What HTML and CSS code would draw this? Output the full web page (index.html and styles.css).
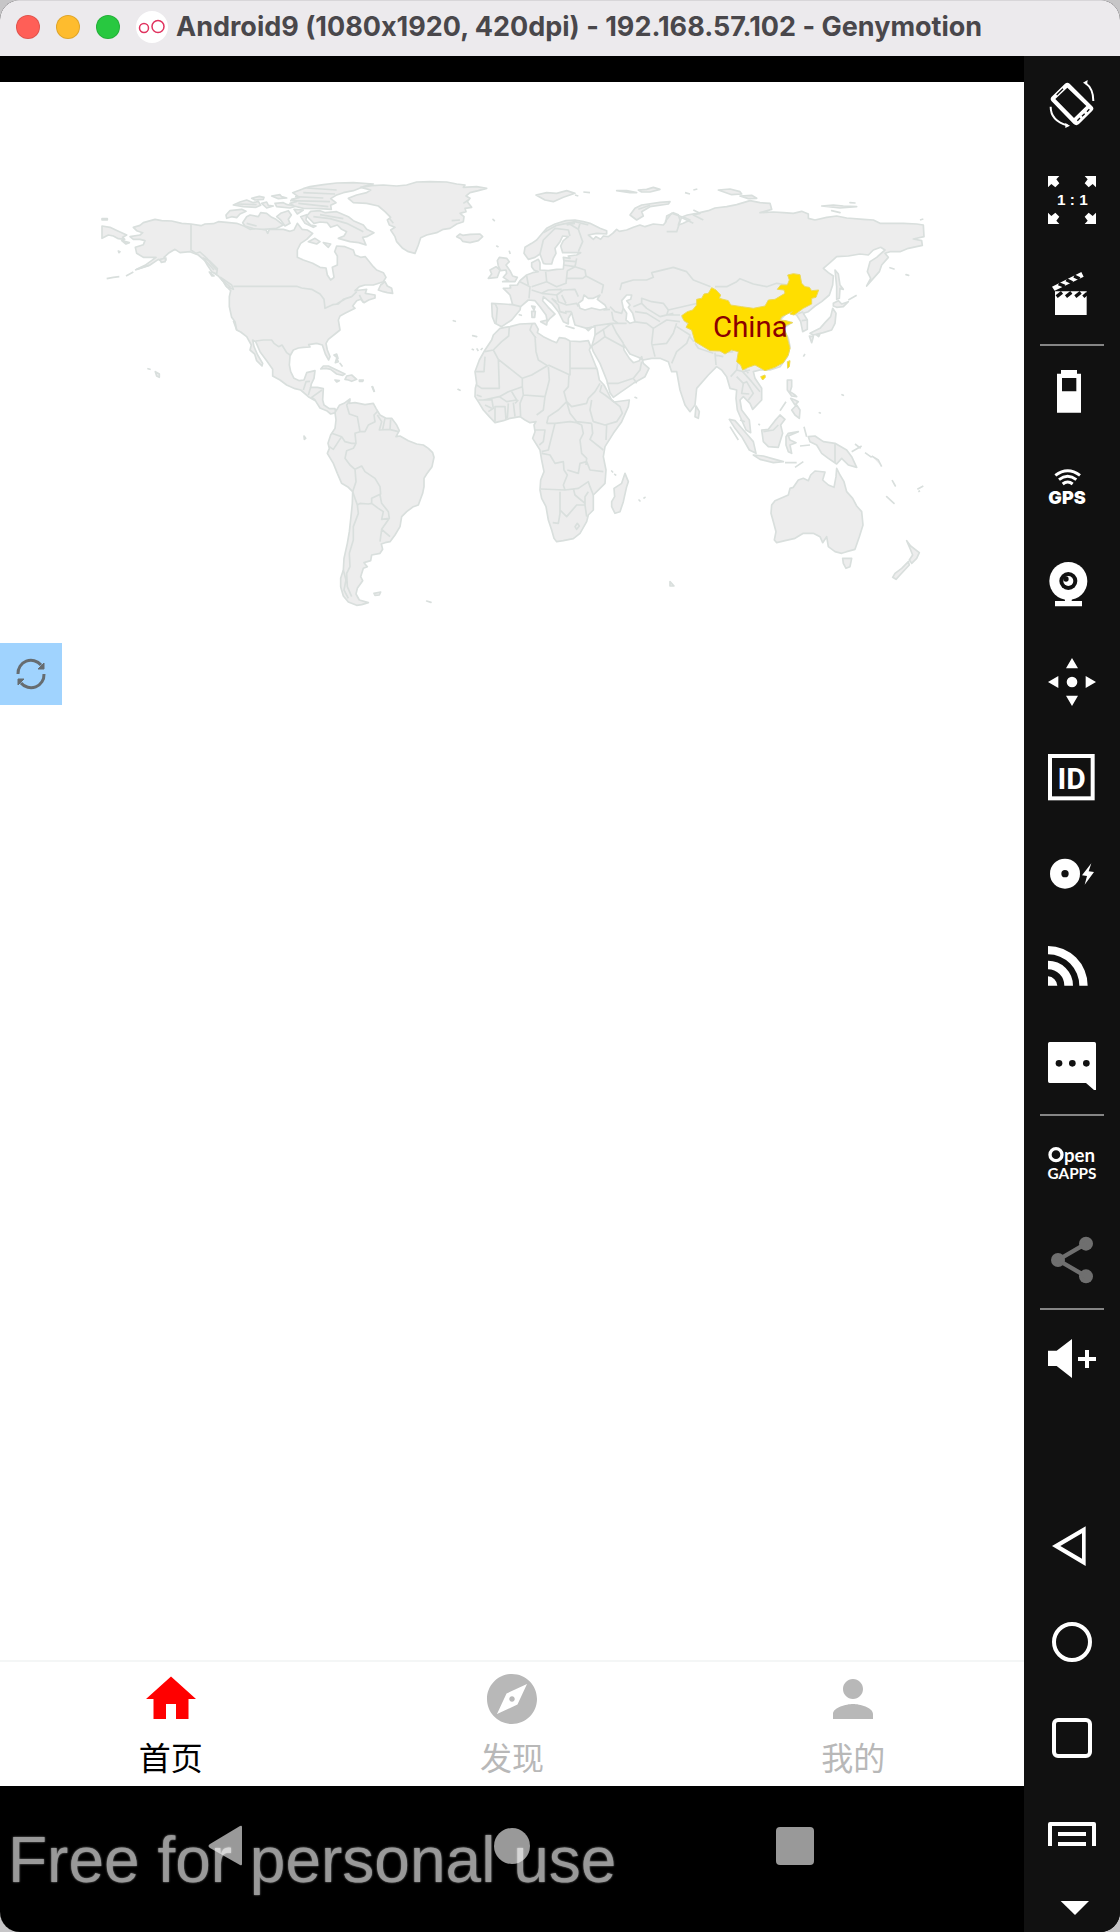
FILE: index.html
```html
<!DOCTYPE html>
<html lang="zh-CN">
<head>
<meta charset="utf-8">
<meta name="viewport" content="width=device-width, initial-scale=1">
<title>Android9 - Genymotion</title>
<link rel="stylesheet" href="styles.css">
</head>
<body>
<div class="window">
  <header class="titlebar">
    <div class="lights">
      <button class="light light-close" aria-label="Close"></button>
      <button class="light light-min" aria-label="Minimize"></button>
      <button class="light light-zoom" aria-label="Zoom"></button>
    </div>
    <svg class="logo" viewBox="0 0 32 32" aria-hidden="true">
      <circle cx="16" cy="16" r="16" fill="#fff"/>
      <g fill="none" stroke="#e0335f" stroke-width="1.5"><circle cx="8" cy="17" r="4.5"/><circle cx="22" cy="15.500" r="6"/></g>
    </svg>
    <h1 class="title">Android9 (1080x1920, 420dpi) - 192.168.57.102 - Genymotion</h1>
  </header>

  <div class="body">
    <div class="device">
      <div class="statusbar"></div>
      <main class="content">
        <svg class="map" viewBox="-270 -264 3072 1683" role="img" aria-label="World map">
          <!-- North America -->
          <g class="land">
            <path d="M130,172 L150,166 160,158 195,148 215,152 245,153 275,160 303,162 333,167 345,162 370,161 385,155 410,157 440,160 462,168 480,178 500,174 528,180 533,190 538,178 580,178 600,184 612,180 622,160 636,178 652,180 668,190 650,208 632,220 622,240 622,262 640,270 668,280 690,292 708,294 712,315 722,330 732,322 727,292 742,285 742,258 734,245 740,228 765,230 790,240 795,255 812,262 826,260 838,275 850,290 860,300 880,308 888,322 880,335 850,345 825,345 808,350 795,362 812,360 830,358 826,370 855,375 855,384 836,390 822,398 812,388 800,392 788,408 795,415 765,430 750,438 745,450 750,480 735,492 715,508 708,520 712,540 720,560 716,570 706,552 697,525 680,520 656,524 660,531 640,532 625,534 610,540 600,558 598,585 602,605 612,625 628,632 642,630 650,608 675,602 672,625 664,642 662,652 682,652 700,656 698,690 702,705 718,716 735,716 737,728 722,732 710,722 690,714 676,692 655,680 632,660 615,656 590,645 570,630 548,618 548,598 530,572 510,545 497,515 488,510 492,530 503,555 518,580 516,588 500,572 494,552 480,540 484,525 470,500 452,486 440,480 435,455 425,442 418,410 418,380 422,362 408,348 400,335 385,318 370,308 362,295 348,275 325,255 300,245 270,248 255,238 235,250 222,262 228,270 215,275 205,268 180,285 140,298 165,286 198,262 160,262 140,250 136,232 160,224 165,212 150,208 130,208 120,200 150,195 158,188 140,182Z"/>
            <path d="M410,145 L408,135 420,122 455,118 468,124 450,132 440,143 425,140Z"/>
            <path d="M458,158 L470,140 480,135 505,140 512,128 530,130 545,142 558,148 580,165 560,175 520,178 490,176 465,168Z"/>
            <path d="M430,105 L450,96 470,90 490,98 505,94 512,106 498,112 460,110Z M485,85 L508,79 522,82 520,88 495,90Z M515,100 L530,96 535,106 550,108 530,114Z M545,78 L570,74 575,80 590,84 565,86Z M555,100 L580,98 592,104 620,108 600,114 560,110Z M572,130 L595,122 604,135 595,148 600,160 585,168 572,150 560,140Z"/>
            <path d="M608,68 L640,56 660,50 700,44 740,39 790,38 850,42 820,50 790,62 760,68 738,76 722,86 738,98 722,106 724,118 690,116 640,115 612,108 600,100 620,94 605,88 628,82Z"/>
            <path d="M650,138 L662,124 690,122 706,128 740,125 775,140 790,152 820,165 830,178 852,188 830,200 818,202 828,225 806,218 780,215 745,205 762,198 770,185 755,178 742,165 722,172 712,158 690,156 672,160Z"/>
            <path d="M612,118 L640,120 622,132Z M632,140 L650,134 648,150 662,165 678,168 670,172 645,160Z M655,215 L675,205 690,215 680,222Z M700,218 L722,222 715,232Z"/>
            <path d="M865,360 L872,345 885,335 892,348 905,355 908,370 892,368 880,365Z"/>
            <path d="M36,168 L60,172 82,182 110,195 98,202 104,208 85,206 70,198 55,195 36,205Z M36,146 H52 V150 H36Z M95,212 L118,218 108,222Z M210,268 L228,264 225,275 214,277Z M340,264 L358,272 382,296 380,312 365,305 352,285Z M392,322 L425,345 430,358 410,350Z M358,306 L372,318 366,318Z"/>
            <path d="M692,597 L700,588 715,588 740,600 765,612 758,616 740,612 722,598 708,595Z M765,628 L770,618 785,615 800,628 785,634 775,630Z M735,630 L748,632 740,636Z M808,630 L820,630 818,634 808,634Z M732,555 L740,552 744,565Z M740,565 L736,578 745,575Z M196,605 L208,612 208,622 200,618Z M174,596 L180,598Z M846,650 L852,664Z M750,580 L756,588Z M85,243 L90,245 87,248Z"/>
            <path d="M50,326 L70,322 88,320 M108,318 L130,306 M135,300 L178,286"/>
            <path class="border" d="M303,162 V240 L318,250 330,246 350,264 366,285 380,300 M430,349 H620 L635,354 665,358 690,372 702,388 705,415 728,404 745,402 760,388 785,380 800,365 M497,513 L520,510 545,510 552,520 566,530 576,525 590,548 600,555 M640,660 L648,635 660,634 M662,652 L655,675 M676,690 L665,682 696,660 M440,480 L430,452 M820,398 L808,375 M740,402 L770,384 M470,160 L500,168 M615,80 L700,84 M600,92 L720,95 M640,68 L735,72 M650,54 L740,60 M440,102 L500,104 M625,100 L715,110 M670,140 L720,146 770,160 820,185 M690,134 L760,146 M345,270 L372,300 M395,328 L422,352"/>
          </g>
          <!-- Greenland, Iceland and South America -->
          <g class="land" transform="translate(630 0)">
            <path d="M145,85 L170,75 200,68 212,60 182,52 215,47 250,45 290,48 320,45 350,36 390,35 440,36 470,42 495,45 490,52 530,50 560,55 535,62 510,68 498,78 510,85 502,95 515,112 495,115 498,125 480,130 492,140 490,155 470,162 450,175 430,178 410,188 380,195 362,203 355,225 345,250 325,245 308,235 290,215 285,200 272,180 285,172 268,165 262,150 272,142 255,125 235,108 200,100 160,98Z"/>
            <path d="M470,200 L480,192 488,196 510,193 540,192 548,200 535,212 510,218 488,214 482,206Z"/>
            <path d="M105,728 L118,706 132,700 150,687 148,700 165,698 195,704 220,700 228,715 240,735 258,745 275,745 290,765 298,782 288,800 300,798 325,812 350,822 370,825 385,835 398,848 402,862 396,890 380,912 372,925 372,950 368,970 355,1005 340,1010 320,1025 305,1040 300,1070 285,1095 270,1115 255,1118 244,1122 248,1138 240,1150 215,1155 212,1172 192,1178 202,1190 190,1195 182,1220 188,1232 172,1255 168,1272 178,1290 205,1298 185,1304 170,1306 145,1296 130,1278 122,1250 122,1225 130,1200 132,1165 142,1120 148,1085 154,1030 157,1000 158,965 145,952 125,940 112,910 100,880 82,850 88,835 84,820 92,795 105,775 108,750Z"/>
            <path d="M222,1270 L242,1266 238,1275 225,1276Z M380,1293 L393,1297Z M12,798 L17,805 13,808Z M460,452 L466,454Z M518,497 L530,500Z M515,537 L522,540 M530,535 L535,543 M542,540 L548,534 M474,658 L480,661Z M579,148 L583,152Z M218,650 L223,664Z M590,228 L594,230Z"/>
            <path class="border" d="M150,690 L140,705 148,732 172,740 180,785 165,790 168,820 M180,785 L195,785 205,765 225,755 222,735 232,725 M232,735 L245,755 238,780 268,778 295,785 M255,745 L248,778 M272,748 L270,778 M95,790 L125,800 100,838 88,830 M125,800 L135,815 155,820 168,820 160,835 140,842 135,865 150,885 165,898 185,888 195,905 225,925 240,950 242,972 215,985 215,1000 M165,898 L168,935 158,965 172,1005 180,1000 205,1002 215,1000 235,1015 250,1025 245,1048 268,1045 265,1025 245,1000 240,975 M268,1045 L245,1078 270,1100 M245,1078 L240,1115 M172,1005 L175,1030 160,1070 160,1110 148,1150 150,1190 140,1210 142,1250 155,1280 M130,1200 L138,1230 132,1260 145,1285 M268,145 L280,160 M480,150 L455,152 M505,90 L490,100"/>
          </g>
          <!-- Africa -->
          <g class="land" transform="translate(1110 0)">
            <path d="M120,475 L135,472 150,470 180,462 225,460 235,478 232,488 250,500 275,512 290,518 298,503 315,505 330,513 360,515 385,512 392,530 388,540 400,570 412,600 418,630 432,645 440,660 455,690 462,696 508,690 505,710 485,755 460,790 435,830 430,860 438,900 435,940 420,955 400,975 400,1020 385,1035 380,1055 360,1090 340,1106 310,1112 290,1115 282,1105 275,1080 265,1050 258,1010 245,985 240,960 242,930 252,905 245,870 240,840 218,805 225,785 222,765 228,755 210,758 195,750 180,740 150,745 130,752 105,758 88,740 70,720 58,700 45,680 46,655 50,640 45,605 58,570 75,540 95,510 100,495Z"/>
            <path d="M495,910 L505,935 500,950 490,995 480,1025 465,1030 455,1010 455,995 464,980 462,955 485,940Z"/>
            <path d="M455,903 L458,906Z M464,913 L467,915Z M537,990 L540,993Z M552,984 L555,982Z M525,682 L530,684Z"/>
            <path class="border" d="M148,470 L146,498 125,515 100,540 75,545 M100,540 L115,568 187,625 215,615 262,587 235,570 228,545 225,500 M115,568 L118,655 65,655 50,645 M75,560 L72,605 47,605 M187,625 L187,650 145,665 118,680 70,690 M217,460 L210,480 228,505 M330,513 V595 H412 M330,595 V615 L265,585 M265,590 L268,630 255,680 190,675 180,700 182,740 M327,612 L325,650 312,665 320,695 295,720 265,740 260,760 M187,650 L190,675 M255,680 L250,720 230,735 M320,695 L335,710 380,700 385,685 405,665 420,640 M320,695 L330,730 350,755 395,760 M395,690 L390,720 400,755 M425,645 L420,665 435,675 455,690 M455,690 L480,710 487,730 470,755 435,765 400,755 M440,765 L438,810 M395,760 L398,790 390,808 430,840 M365,765 L370,790 360,810 365,850 380,865 378,885 M260,760 L285,760 330,755 350,758 365,765 M285,760 L275,800 265,840 245,845 M222,780 L255,780 250,815 238,825 M245,850 L270,855 285,880 310,875 312,900 322,915 310,945 315,960 243,957 M322,900 L355,910 360,880 380,875 390,900 430,905 M315,960 L355,955 385,935 390,950 400,975 M300,965 V1030 L295,1060 278,1058 M300,1020 L320,1040 350,1005 375,1005 375,980 385,965 M340,955 L345,975 375,1000 M345,1070 L352,1060 358,1068 350,1078Z M375,1005 L380,1040 M95,685 L100,715 85,725 M105,755 L105,710 135,710 138,750 M145,700 L142,745 M160,698 L165,740 M175,690 L165,700 M118,680 L140,695 170,690 155,665 M55,690 L95,690 M65,680 L50,675 M75,705 L95,715"/>
          </g>
          <!-- Eurasia -->
          <g class="land" transform="translate(1110 0)">
            <path d="M95,400 L130,402 158,404 150,375 130,355 152,354 150,346 172,345 180,332 200,315 218,308 235,305 222,300 215,290 215,278 235,268 240,278 240,300 265,302 290,298 310,297 312,275 310,262 330,265 325,258 350,255 362,248 330,248 308,248 302,228 310,212 325,200 308,198 300,215 285,235 288,250 280,265 275,282 258,282 250,280 240,252 225,262 205,268 192,250 195,232 215,220 230,210 245,192 260,175 285,162 318,152 345,150 370,155 390,160 420,175 440,182 440,192 410,190 385,195 400,208 408,200 422,208 430,198 445,200 458,190 470,178 478,184 500,180 520,172 540,165 555,170 580,162 610,165 618,155 620,138 640,128 655,134 660,150 655,165 670,160 690,150 668,140 682,135 710,130 745,122 765,114 800,110 830,104 870,92 900,98 930,100 935,118 900,128 940,126 970,128 1000,130 1025,124 1045,132 1045,145 1065,150 1100,142 1130,138 1160,144 1210,148 1240,150 1260,160 1300,160 1330,160 1370,162 1390,165 1392,200 1360,207 1385,212 1387,226 1345,235 1320,245 1290,245 1275,250 1285,262 1265,285 1258,305 1240,325 1220,348 1232,325 1222,305 1230,275 1250,262 1275,240 1262,232 1240,240 1225,255 1200,252 1165,258 1130,260 1110,278 1090,295 1105,308 1120,318 1118,345 1108,375 1085,395 1065,408 1045,425 1030,430 1042,450 1042,478 1028,485 1022,455 1010,435 985,425 960,450 992,460 970,475 985,505 990,530 982,560 960,590 930,600 900,600 880,605 885,625 905,655 905,690 878,718 870,700 850,680 840,690 845,720 868,750 872,788 858,780 845,750 832,720 828,685 830,660 810,655 800,620 785,600 770,590 745,615 710,655 705,705 690,725 675,705 660,660 650,605 635,605 625,575 600,565 575,565 550,570 535,562 510,552 490,522 492,540 508,565 520,578 538,572 545,560 550,580 567,595 555,620 520,640 480,668 460,682 450,668 440,630 420,580 400,545 395,530 405,495 405,470 380,475 345,465 338,440 335,428 325,445 325,462 310,455 295,425 275,400 250,380 248,392 265,412 285,432 270,445 262,455 258,435 240,410 225,392 205,390 182,410 180,420 155,450 125,470 105,460 97,440Z"/>
            <path d="M128,335 L145,332 130,322 140,310 138,300 122,302 115,288 112,272 118,262 140,265 148,275 138,285 150,302 158,318 172,322 165,335Z M85,325 L95,312 90,300 108,290 120,300 112,322Z"/>
            <path d="M228,75 L260,68 290,70 320,62 345,70 310,82 280,95 255,90Z M345,75 L355,78 M370,66 L390,68 M470,62 L500,62 530,68 510,68Z M535,60 L560,58 580,52 600,58 570,66 545,66Z M675,68 L690,72 M700,60 L712,57"/>
            <path d="M510,135 L525,115 545,105 600,97 630,95 625,102 570,110 545,125 550,138 530,150Z"/>
            <path d="M215,408 L225,410 222,420Z M215,424 L226,424 224,442 216,442Z M242,455 L262,450 260,465Z M318,468 L342,475Z M378,475 L395,472 385,482Z M178,434 L184,436Z M708,708 L718,725 715,745 705,740Z M148,244 L150,250Z"/>
            <path class="border" d="M158,404 L182,410 M105,400 L112,415 108,460 M180,335 L210,350 207,385 M200,318 L205,345 M257,305 L260,335 215,350 M260,335 L290,350 318,340 322,302 M215,360 L245,370 265,360 305,358 M245,370 L290,375 310,360 345,358 355,380 M290,375 L295,395 320,405 350,400 355,410 M275,385 L295,405 300,425 320,430 M305,375 L318,400 M315,425 L335,425 M322,325 L368,325 378,318 430,345 425,370 M322,302 L345,290 375,300 378,318 M310,285 L345,290 350,265 M312,272 L348,275 M240,252 L250,210 285,175 325,180 330,198 M325,160 L355,178 368,215 355,245 M360,160 L355,178 M345,160 L320,165 M450,410 L465,425 485,430 490,415 M455,425 L460,450 475,460 M400,468 L455,460 475,460 M405,495 L435,475 455,460 470,490 490,520 M395,528 L415,515 435,500 430,480 M440,640 L475,640 520,625 540,600 545,575 M520,625 L530,640 M435,500 L490,530 M475,460 L500,460 M520,455 L560,460 580,475 575,520 585,560 M580,475 L620,450 660,455 M575,525 L620,520 640,490 650,460 M480,360 L485,340 520,330 560,330 580,322 575,308 600,302 640,292 680,305 700,330 752,350 M520,410 L545,400 545,385 575,395 610,400 625,420 690,405 712,400 M545,400 L560,415 600,440 640,430 M525,425 L560,430 600,455 M625,420 L620,435 660,435 M650,470 L690,495 680,520 650,545 635,580 M690,500 L702,515 M705,520 L715,535 760,550 M765,548 L768,585 M765,555 L790,560 M795,548 L820,545 M835,565 L830,600 812,620 M830,600 L850,605 870,600 M830,620 L850,640 860,635 880,670 865,690 M848,605 L875,635 900,665 M850,640 L845,670 868,672 M765,350 L800,350 830,335 840,326 880,342 920,350 950,340 985,345 M850,590 L865,610 M840,750 L855,755 M1012,432 L1030,425 M1025,452 L1042,450 M690,470 L665,440 M290,395 L275,385 M430,420 L450,418 M250,188 L290,166 345,155 385,165 M535,118 L570,106"/>
            <path class="water" d="M360,415 L355,400 368,390 372,375 385,385 400,385 420,375 412,388 435,405 440,415 420,420 395,414 375,420Z M485,392 L500,375 515,375 512,388 500,392 510,405 505,412 518,430 525,455 510,460 498,450 500,430 490,415Z"/>
          </g>
          <!-- Far East islands, Oceania and China -->
          <g transform="translate(1710 0)">
            <g class="land">
              <path d="M525,300 L535,312 540,345 550,358 540,355 538,385 530,388 530,350Z M520,400 L535,392 545,402 565,395 550,410 530,412 520,408Z M518,415 L528,430 525,460 515,480 490,488 460,495 450,490 480,475 495,458 512,440Z M448,498 L460,500 455,518Z M468,494 L480,492 476,500Z M565,390 L590,376"/>
              <path d="M382,630 L395,630 395,650 390,665 405,675 410,680 395,678 382,660Z M392,685 L405,690 415,695 405,705Z M395,720 L410,705 420,720 418,745 405,735Z M360,722 L378,695"/>
              <path d="M208,748 L225,752 250,780 280,815 288,850 268,840 245,800 225,775Z M280,855 L310,858 345,868 370,875 340,878 300,868Z M375,878 L410,878 M405,892 L430,875 M305,780 L325,778 345,752 360,735 375,748 362,765 368,790 355,832 325,830 310,815Z M378,800 L385,790 415,785 385,798 390,810 408,818 390,825 395,850 385,845 378,825Z M432,770 L440,800 M420,828 L450,825 M445,800 L465,798 490,815 525,820 560,840 575,860 590,892 565,885 545,865 530,882 505,865 485,850 470,825 450,815Z M575,845 L605,828 M585,822 L602,835 M615,848 L635,862 M635,858 L655,870 665,890 M210,770 L235,810 M295,762 L300,765 M435,552 L430,560 M380,460 L397,457"/>
              <path d="M333,1030 L335,1005 345,992 385,975 390,955 400,952 415,930 430,925 445,932 452,915 465,903 495,906 488,930 505,945 522,952 528,920 530,895 540,915 552,935 560,965 578,985 590,1008 605,1025 609,1065 598,1100 585,1138 560,1145 545,1150 525,1145 505,1130 500,1100 488,1118 480,1100 460,1090 430,1090 405,1105 375,1112 350,1118 343,1110 348,1085 340,1055Z M548,1165 L575,1165 570,1190 558,1195 550,1180Z"/>
              <path d="M740,1112 L752,1128 778,1148 770,1165 755,1180 748,1170 758,1155 752,1140Z M745,1175 L748,1185 720,1215 708,1228 698,1222 705,1210 725,1195Z M680,980 L702,1000Z M697,932 L706,948Z M772,958 L790,948 M775,965 L780,962 M30,1235 L30,1248 42,1248Z M546,674 L550,676Z M478,728 L481,729Z"/>
              <path d="M175,60 L210,57 240,65 245,72 215,74Z M240,78 L275,76 290,85 265,86Z M485,108 L520,105 550,108 590,110 540,114Z M515,122 L540,128Z M570,98 L585,99Z M780,150 L790,147 M690,293 L702,297Z M738,314 L746,316Z"/>
              <path class="border" d="M525,820 V878 M310,785 L340,780 355,765 M100,120 L120,130 100,135 130,150 M60,140 L100,160 M15,155 L35,130 65,140 50,185 20,185"/>
            </g>
            <path class="china" d="M65,437 L82,425 98,420 110,405 110,388 125,385 132,372 145,370 155,353 168,360 182,375 178,385 205,392 212,405 245,410 280,415 315,408 325,390 345,388 375,370 372,360 352,358 362,345 382,345 388,330 383,315 400,311 420,314 425,340 435,350 448,352 455,362 476,360 468,382 455,385 455,402 430,415 402,435 390,432 397,425 365,440 360,450 378,452 398,458 380,465 372,475 380,495 385,515 390,535 385,555 370,578 345,592 315,602 285,585 265,592 248,600 242,585 230,575 235,545 215,540 195,552 180,543 150,542 130,530 105,515 95,480 78,472 85,460 72,452Z M382,575 L390,572 388,590 383,595Z M302,620 L315,615 316,622 308,630Z"/>
            <text class="map-label" x="271" y="501">China</text>
          </g>
        </svg>
        <button class="refresh" aria-label="Refresh">
          <svg viewBox="0 0 36 36" aria-hidden="true">
            <g fill="none" stroke="#666c70" stroke-width="3"><path d="M5 18a13 13 0 0 1 23-9"/><path d="M31 18a13 13 0 0 1-23 9"/></g>
            <path d="M31 7v6h-6zM5 29v-6h6z" fill="#666c70" stroke="#666c70"/>
          </svg>
        </button>
      </main>
      <nav class="tabs">
        <a class="tab tab-active" href="#home">
          <svg viewBox="0 0 24 24" aria-hidden="true"><path d="M10 20v-6h4v6h5v-8h3L12 3 2 12h3v8z"/></svg>
          <span>首页</span>
        </a>
        <a class="tab" href="#explore">
          <svg viewBox="0 0 24 24" aria-hidden="true"><path d="M12 10.900c-.61 0-1.100.49-1.100 1.100s.49 1.100 1.100 1.100c.61 0 1.100-.49 1.100-1.100s-.49-1.100-1.100-1.100zM12 2C6.480 2 2 6.480 2 12s4.480 10 10 10 10-4.480 10-10S17.520 2 12 2zm2.190 12.190L6 18l3.810-8.190L18 6l-3.810 8.190z"/></svg>
          <span>发现</span>
        </a>
        <a class="tab" href="#me">
          <svg viewBox="0 0 24 24" aria-hidden="true"><path d="M12 12c2.210 0 4-1.790 4-4s-1.790-4-4-4-4 1.790-4 4 1.790 4 4 4zm0 2c-2.670 0-8 1.340-8 4v2h16v-2c0-2.660-5.330-4-8-4z"/></svg>
          <span>我的</span>
        </a>
      </nav>
      <div class="navbar">
        <p class="watermark">Free for personal use</p>
        <button class="nav-key" aria-label="Back"><svg viewBox="0 0 48 48"><path d="M37 5v37q0 2-2 1L5 26q-3-2 0-4L35 4q2-1 2 1z"/></svg></button>
        <button class="nav-key" aria-label="Home"><svg viewBox="0 0 48 48"><circle cx="24" cy="24" r="18"/></svg></button>
        <button class="nav-key" aria-label="Recent apps"><svg viewBox="0 0 48 48"><rect x="5" y="5" width="38" height="38" rx="4"/></svg></button>
      </div>
    </div>

    <aside class="toolbar">
      <div class="tools">
        <button class="tool" aria-label="Rotate"><svg viewBox="0 0 144 144">
          <path fill-rule="evenodd" d="M51 11q7-6 14 0l67 67q8 8 1 14l-40 40q-8 7-16 0L11 64q-6-8 0-14zM58 23 22 57l56 57 37-36z"/>
          <path d="M26 45l19-19M88 122l8-8M102 109l8-8M117 95l7-7" fill="none" stroke="#111" stroke-width="4"/>
          <path d="M112 9q24 16 24 54M8 80q0 42 50 56" fill="none" stroke="#fff" stroke-width="6"/>
          <path d="M105 8l14-8-2 16zM66 137l-14-8v15z"/></svg></button>
        <button class="tool" aria-label="Pixel perfect"><svg viewBox="0 0 144 144">
          <path d="M0 0h34L25 10l9 12-12 12-12-10L0 34zM144 0h-34l9 10-9 12 12 12 12-10 10 10zM0 144h34l-9-10 9-12-12-12-12 10-10-10zM144 144h-34l9-10-9-12 12-12 12 10 10-10z"/>
          <text class="t-ratio" x="73" y="88">1 : 1</text></svg></button>
        <button class="tool" aria-label="Capture"><svg viewBox="0 0 144 144">
          <path d="M12 44l88-44 7 14-87 42zM21 58h95v71H21z"/>
          <path d="M32 35l18 8M55 23l18 9M78 12l17 8M26 74l16-13M54 74l16-13M82 74l16-13M106 74l12-10" stroke="#111" stroke-width="10" fill="none"/></svg></button>
        <hr class="rule">
        <button class="tool" aria-label="Battery"><svg viewBox="0 0 144 144"><path fill-rule="evenodd" d="M39 0h48v11h12v117H27V11h12zM42 24v40h43V24z"/></svg></button>
        <button class="tool" aria-label="GPS"><svg viewBox="0 0 144 144">
          <g fill="none" stroke="#fff" stroke-width="9"><path d="M22 28q37-28 74 0"/><path d="M33 41q26-20 52 0"/><path d="M44 54q15-12 30 0"/></g>
          <text class="t-gps" x="57" y="113">GPS</text></svg></button>
        <button class="tool" aria-label="Camera"><svg viewBox="0 0 144 144">
          <path d="M50 108h22l-1 9h31v16H21v-16h30z"/><circle cx="61" cy="57" r="57"/><circle cx="61" cy="57" r="27" fill="#111"/><circle cx="61" cy="57" r="15"/><circle cx="54" cy="51" r="8" fill="#111"/></svg></button>
        <button class="tool" aria-label="Motion"><svg viewBox="0 0 144 144"><path d="M72 0l18 31H54zM72 144l18-31H54zM0 72l31-18v36zM144 72l-31-18v36z"/><circle cx="72" cy="72" r="16"/></svg></button>
        <button class="tool" aria-label="Identifiers"><svg viewBox="0 0 144 144"><rect x="6" y="6" width="128" height="127" fill="none" stroke="#fff" stroke-width="12"/><text class="t-id" x="71" y="104">ID</text></svg></button>
        <button class="tool" aria-label="Disk I/O"><svg viewBox="0 0 144 144"><circle cx="51" cy="71" r="45"/><circle cx="51" cy="71" r="11" fill="#111"/><path d="M130 40l-28 36 15 2-7 26 28-38-16-2z"/></svg></button>
        <button class="tool" aria-label="Network"><svg viewBox="0 0 144 144"><path d="M0 0a119 119 0 0 1 119 119H94A94 94 0 0 0 0 25zM0 44a75 75 0 0 1 75 75H49A49 49 0 0 0 0 70zM0 91a30 30 0 0 1 28 28H0z"/></svg></button>
        <button class="tool" aria-label="Phone"><svg viewBox="0 0 144 144"><path d="M5 0h134q5 0 5 5v139h-6l-24-21H5q-5 0-5-5V5q0-5 5-5z"/><g fill="#111"><circle cx="33" cy="64" r="10"/><circle cx="73" cy="64" r="10"/><circle cx="115" cy="64" r="10"/></g></svg></button>
        <hr class="rule">
        <button class="tool" aria-label="Open GAPPS"><svg viewBox="0 0 144 144"><circle cx="24" cy="44" r="18" fill="none" stroke="#fff" stroke-width="10"/><text class="t-open" x="48" y="65">pen</text><text class="t-gapps" x="72" y="116">GAPPS</text></svg></button>
        <button class="tool" aria-label="Share" disabled><svg viewBox="0 0 144 144"><g fill="#6f6f6f"><circle cx="114" cy="23" r="21"/><circle cx="30" cy="72" r="21"/><circle cx="114" cy="121" r="21"/></g><path d="M114 23L30 72l84 49" fill="none" stroke="#6f6f6f" stroke-width="13"/></svg></button>
        <hr class="rule">
        <button class="tool" aria-label="Volume up"><svg viewBox="0 0 144 144"><path d="M0 50h26l46-35v117L26 96H0zM111 48h12v21h21v12h-21v21h-12V81H90V69h21z"/></svg></button>
      </div>
      <div class="tools">
        <button class="tool" aria-label="Back"><svg viewBox="0 0 144 144"><path fill-rule="evenodd" d="M12 72L113 13v119zM37 72l65 38V34z"/></svg></button>
        <button class="tool" aria-label="Home"><svg viewBox="0 0 144 144"><circle cx="72" cy="72" r="54" fill="none" stroke="#fff" stroke-width="12"/></svg></button>
        <button class="tool" aria-label="Recent apps"><svg viewBox="0 0 144 144"><rect x="18" y="18" width="108" height="108" rx="12" fill="none" stroke="#fff" stroke-width="12"/></svg></button>
        <button class="tool" aria-label="Menu"><svg viewBox="0 0 144 144"><path d="M6 108V42h132v66M30 72h84M30 102h84" fill="none" stroke="#fff" stroke-width="12" stroke-linejoin="round"/></svg></button>
        <button class="tool tool-more" aria-label="More"><svg viewBox="0 0 144 144"><path d="M38 54h85l-42 42z"/></svg></button>
      </div>
    </aside>
  </div>
</div>
</body>
</html>
```
FILE: styles.css
```css
* { box-sizing: border-box; }
body { margin: 0; background: #c6c5c7; font-family: Inter, "Noto Sans CJK SC", sans-serif; }
button { margin: 0; padding: 0; border: 0; background: none; display: flex; align-items: center; justify-content: center; }
svg { display: block; }

.window { min-height: 100vh; display: flex; flex-direction: column; border-radius: 20px; overflow: hidden; background: #000; }

.titlebar { height: 56px; padding: 0 16px; display: flex; align-items: center; background: #eceaed; border-top: 1px solid #d8d6d9; padding-bottom: 3px; }
.lights { display: flex; gap: 16px; }
.light { width: 24px; height: 24px; border-radius: 50%; border: 1px solid rgba(0, 0, 0, .12); }
.light-close { background: #ff5f57; }
.light-min { background: #febc2e; }
.light-zoom { background: #28c840; }
.logo { width: 32px; height: 32px; margin: 0 8px 0 16px; }
.title { margin: 0; font-size: 27px; line-height: 32px; font-weight: 700; font-feature-settings: "calt" 0; color: #49474b; white-space: nowrap; }

.body { flex: 1; display: flex; }
.device { flex: 1; min-width: 0; display: flex; flex-direction: column; background: #fff; }
.statusbar { height: 26px; background: #000; }
.content { flex: 1; }

.map { width: 100%; height: auto; }
.land path { fill: #ededed; stroke: #d9dfdd; stroke-width: 5; stroke-linejoin: round; }
.land .border { fill: none; }
.land .water { fill: #fff; }
.china { fill: #ffde00; stroke: #ecd95a; stroke-width: 3; }
.map-label { font: 400 88px Roboto, sans-serif; fill: #8b0000; text-anchor: middle; }

.refresh { width: 62px; height: 62px; background: #a0d3fe; }
.refresh svg { width: 36px; height: 36px; }

.tabs { height: 126px; padding-top: 7px; border-top: 2px solid #f4f6f6; display: grid; grid-template-columns: repeat(3, 1fr); }
.tab { display: flex; flex-direction: column; align-items: center; gap: 4px; color: #b8b8b8; text-decoration: none; font: 32px/46px "Noto Sans CJK SC", sans-serif; }
.tab svg { width: 60px; height: 60px; fill: #b8b8b8; }
.tab-active { color: #000; }
.tab-active svg { fill: #f00; }

.navbar { position: relative; height: 146px; padding: 36px 88px 0; background: #000; display: grid; grid-template-columns: repeat(3, 1fr); align-items: start; }
.watermark { position: absolute; left: 8px; top: 38px; margin: 0; font: 64px/72px "Liberation Sans", Arial, sans-serif; color: #999; text-shadow: 0 0 2px #999; }
.nav-key { position: relative; }
.nav-key svg { width: 48px; height: 48px; fill: rgba(255, 255, 255, .6); }

.toolbar { width: 96px; background: #111; display: flex; flex-direction: column; justify-content: space-between; }
.tools { display: flex; flex-direction: column; }
.tool { width: 96px; height: 96px; }
.tool svg { width: 48px; height: 48px; fill: #fff; overflow: visible; }
.tool-more { height: 50px; }
.rule { width: 64px; height: 2px; margin: 0 auto; border: 0; background: #858585; }
.tool text { text-anchor: middle; }
.t-ratio { font: 700 46px "Liberation Sans", sans-serif; }
.t-gps { font: 900 54px Inter, sans-serif; }
.t-id { font: 700 90px Roboto, sans-serif; }
.tool .t-open { font: 700 56px Lato, sans-serif; text-anchor: start; }
.t-gapps { font: 700 46px Lato, sans-serif; }
```
